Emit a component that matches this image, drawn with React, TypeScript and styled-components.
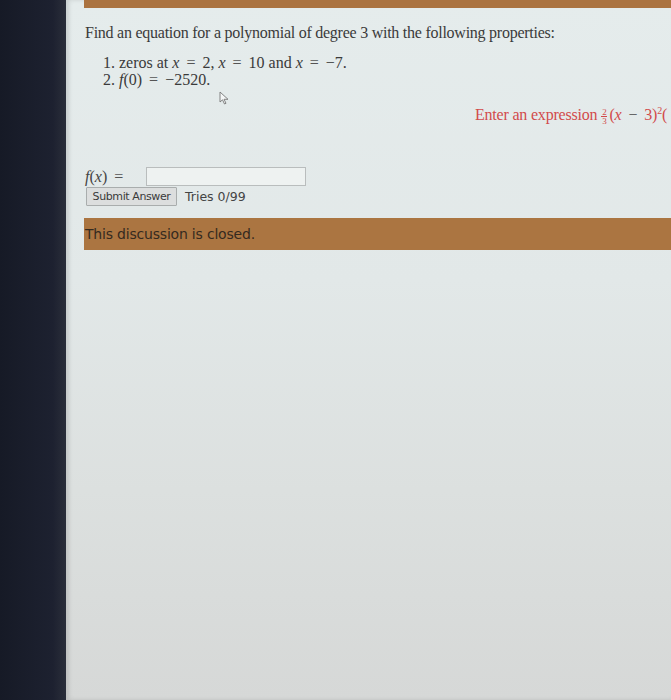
import React from "react";
import styled, { createGlobalStyle } from "styled-components";

const Global = createGlobalStyle`
  html, body { margin: 0; padding: 0; }
  body { width: 671px; height: 700px; overflow: hidden; background: #1b1f2d; }
`;

const Screen = styled.div`
  display: flex;
  width: 671px;
  height: 700px;
`;

const Bezel = styled.div`
  width: 66px;
  flex: none;
  background: linear-gradient(90deg, #161a26 0%, #1d2130 80%, #2a2e3a 100%);
`;

const Page = styled.div`
  flex: 1;
  position: relative;
  display: flex;
  flex-direction: column;
  padding-left: 18px;
  background: linear-gradient(180deg, #e5ecec 0%, #e2e8e8 40%, #dce0df 70%, #d6d8d7 100%);
  box-shadow: inset 3px 0 4px rgba(0, 0, 0, 0.12);
  font-family: "Liberation Serif", "Times New Roman", serif;
  color: #3a3a3a;
  overflow: hidden;
`;

const TopBar = styled.div`
  height: 8px;
  background: #ab7340;
`;

const Prompt = styled.p`
  margin: 15px 0 0 1px;
  font-size: 16px;
  letter-spacing: -0.25px;
  line-height: 20px;
  white-space: nowrap;
`;

const List = styled.ol`
  margin: 11px 0 0 0;
  padding-left: 35px;
  font-size: 16px;
  line-height: 17px;
`;

const Item = styled.li`
  padding-left: 0;
`;

const Var = styled.i`
  font-family: "Liberation Serif", serif;
`;

const Op = styled.span`
  margin: 0 7px;
  color: #555;
`;

const HintRow = styled.div`
  display: flex;
  margin-top: 13px;
  white-space: nowrap;
`;

const Hint = styled.span`
  margin-left: 391px;
  color: #d24a4a;
  font-size: 16px;
  line-height: 20px;
  letter-spacing: -0.2px;
  white-space: nowrap;
`;

const Frac = styled.span`
  display: inline-flex;
  flex-direction: column;
  align-items: center;
  vertical-align: middle;
  font-size: 9px;
  line-height: 8px;
  margin: 0 2px 0 4px;
`;

const FracBar = styled.span`
  width: 6px;
  height: 1px;
  background: #d24a4a;
`;

const Sup = styled.sup`
  font-size: 10px;
`;

const AnswerRow = styled.div`
  display: flex;
  align-items: center;
  margin-top: 42px;
  font-size: 16px;
`;

const Label = styled.span`
  margin-left: 1px;
  width: 61px;
  color: #444;
`;

const Input = styled.div`
  width: 158px;
  height: 17px;
  background: #eef2f1;
  border: 1px solid #b9bdbd;
`;

const ButtonRow = styled.div`
  display: flex;
  align-items: center;
  margin-top: 1px;
  margin-left: 2px;
  font-family: "DejaVu Sans", "Open Sans", sans-serif;
`;

const SubmitButton = styled.button`
  height: 19px;
  width: 91px;
  padding: 0 3px;
  background: #dcdede;
  border: 1px solid #a9adad;
  border-radius: 1px;
  font-family: "DejaVu Sans", sans-serif;
  font-size: 11px;
  letter-spacing: -0.4px;
  color: #3a3a3a;
  white-space: nowrap;
`;

const Tries = styled.span`
  margin-left: 8px;
  font-size: 12.5px;
  color: #444;
`;

const ClosedBar = styled.div`
  margin-top: 12px;
  height: 32px;
  display: flex;
  align-items: center;
  background: #ab7541;
  font-family: "DejaVu Sans", "Open Sans", sans-serif;
  font-size: 14px;
  color: #352a1f;
  letter-spacing: -0.2px;
  padding-left: 1px;
`;

const Cursor = styled.svg`
  position: absolute;
  left: 153px;
  top: 91px;
`;

export default function App() {
  return (
    <>
      <Global />
      <Screen>
        <Bezel />
        <Page>
          <TopBar />
          <Prompt>
            Find an equation for a polynomial of degree 3 with the following properties:
          </Prompt>
          <List>
            <Item>
              zeros at <Var>x</Var>
              <Op>=</Op>2, <Var>x</Var>
              <Op>=</Op>10 and <Var>x</Var>
              <Op>=</Op>−7.
            </Item>
            <Item>
              <Var>f</Var>(0)<Op>=</Op>−2520.
            </Item>
          </List>
          <HintRow>
            <Hint>
              Enter an expression
              <Frac>
                <span>2</span>
                <FracBar />
                <span>3</span>
              </Frac>
              (<Var>x</Var>
              <Op>−</Op>3)<Sup>2</Sup>(
            </Hint>
          </HintRow>
          <AnswerRow>
            <Label>
              <Var>f</Var>(<Var>x</Var>)<Op>=</Op>
            </Label>
            <Input />
          </AnswerRow>
          <ButtonRow>
            <SubmitButton>Submit Answer</SubmitButton>
            <Tries>Tries 0/99</Tries>
          </ButtonRow>
          <ClosedBar>This discussion is closed.</ClosedBar>
          <Cursor width="11" height="14" viewBox="0 0 11 14">
            <path d="M1 1 L1 11 L3.5 8.8 L5.5 13 L7 12.3 L5 8.3 L9 8.3 Z" fill="#f4f6f6" stroke="#777" strokeWidth="0.9" />
          </Cursor>
        </Page>
      </Screen>
    </>
  );
}
